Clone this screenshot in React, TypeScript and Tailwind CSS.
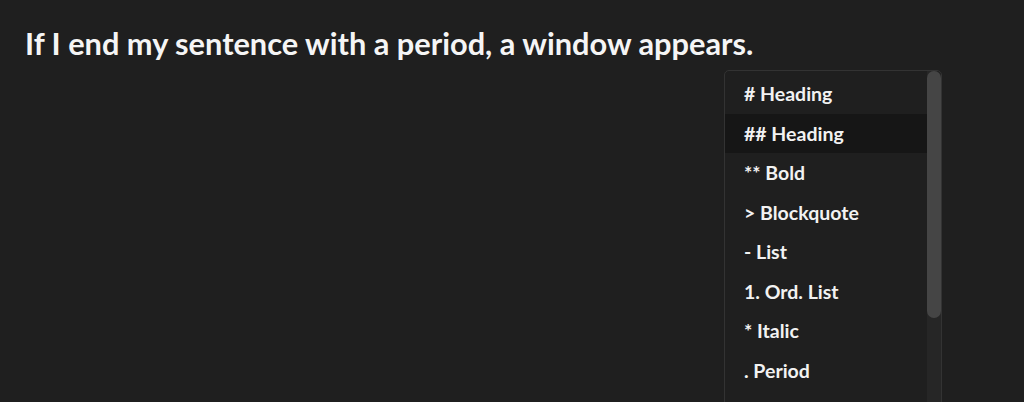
const items = ["# Heading", "## Heading", "** Bold", "> Blockquote", "- List", "1. Ord. List", "* Italic", ". Period"];

export default function App() {
    return (
        <main className="h-[402px] w-full overflow-hidden bg-[#1f1f1f] text-white font-['Lato',sans-serif]">
            <h1 className="pt-[24px] pl-[25px] text-[30.75px] font-bold leading-[40px] text-[#f5f5f5]">
                If I end my sentence with a period, a window appears.
            </h1>
            <div className="ml-[724px] mt-[6px] w-[218px] h-[360px] flex rounded-[5px] border border-[#333333] bg-[#1f1f1f]">
                <ul className="flex-1 pt-[3px]">
                    {items.map((item, i) => (
                        <li
                            key={item}
                            className={`h-[39.5px] flex items-center pl-[19px] text-[19.5px] font-bold text-[#f2f2f2] ${i === 1 ? "bg-[#161616]" : ""}`}
                        >
                            {item}
                        </li>
                    ))}
                </ul>
                <div className="w-[14px] bg-[#262626] rounded-tr-[5px]">
                    <div className="h-[247px] rounded-full bg-[#454545]"></div>
                </div>
            </div>
        </main>
    )
}
